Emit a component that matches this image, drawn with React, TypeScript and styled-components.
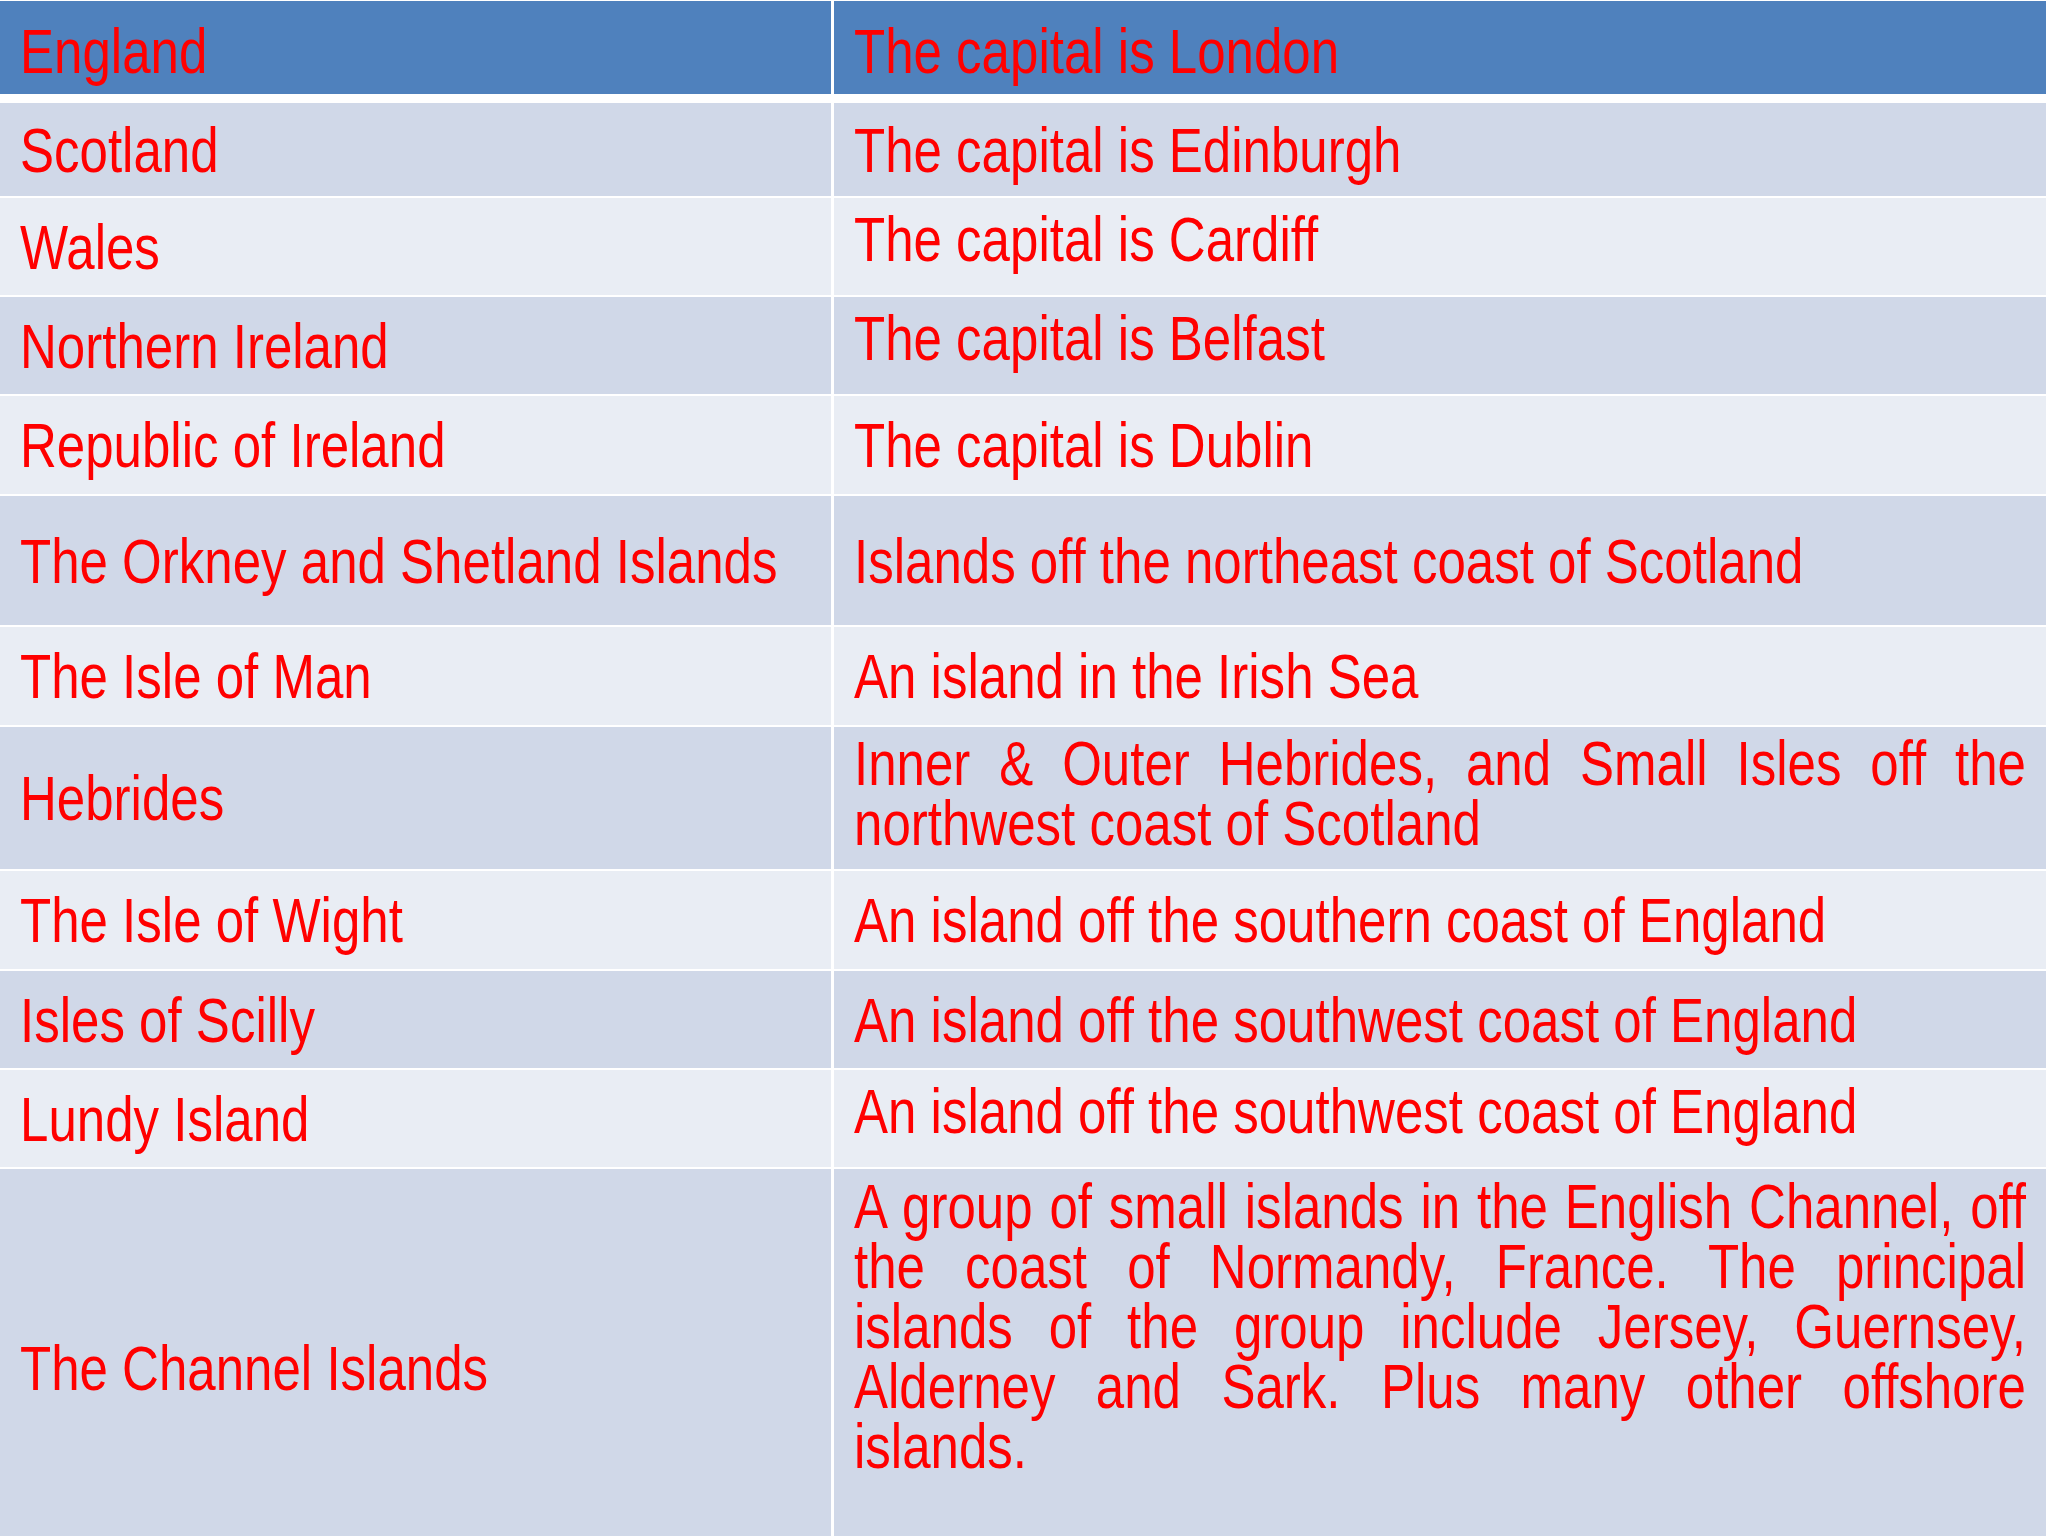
import styled, { createGlobalStyle } from 'styled-components'

const GlobalStyle = createGlobalStyle`
  html, body {
    margin: 0;
    padding: 0;
    background: #ffffff;
    overflow: hidden;
  }
`;

type Tone = 'head' | 'dark' | 'light';

const tones: Record<Tone, string> = {
    head: '#4f81bd',
    dark: '#d0d8e8',
    light: '#e9edf4',
};

// no narrow face installed: Liberation Sans squeezed to Arial Narrow proportions
const NARROW = 0.81;

const Table = styled.div`
    display: flex;
    flex-direction: column;
    gap: 2px;
    width: 2046px;
    padding-top: 1px;
    background: #ffffff;
    font-family: "Liberation Sans", Arial, sans-serif;
    font-size: 63px;
    color: #ff0000;
`;

interface RowProps {
    $height: number;
    $head?: boolean;
}
const Row = styled.div<RowProps>`
    display: grid;
    grid-template-columns: 831px 1fr;
    column-gap: 3px;
    height: ${(p) => p.$height}px;
    flex-shrink: 0;
    margin-bottom: ${(p) => (p.$head ? 7 : 0)}px;
`;

interface CellProps {
    $tone: Tone;
    $top?: boolean;
}
const Cell = styled.div<CellProps>`
    display: flex;
    align-items: ${(p) => (p.$top ? 'flex-start' : 'center')};
    background: ${(p) => tones[p.$tone]};
    padding: ${(p) => (p.$top ? '7px' : '0')} 20px 0 20px;
    box-sizing: border-box;
    min-width: 0;
    overflow: hidden;
`;

interface TextProps {
    $lift?: number;
    $justify?: boolean;
}
const CellText = styled.div<TextProps>`
    flex: none;
    width: calc(100% / ${NARROW});
    line-height: ${(p) => (p.$justify ? '60px' : '74px')};
    text-align: ${(p) => (p.$justify ? 'justify' : 'left')};
    white-space: ${(p) => (p.$justify ? 'normal' : 'nowrap')};
    transform-origin: left center;
    transform: translateY(${(p) => -(p.$lift || 0)}px) scaleX(${NARROW});
`;

interface Entry {
    place: string;
    about: string;
    height: number;
    lift?: number;
    justify?: boolean;
    top?: boolean;
}

const rows: Entry[] = [
    { place: 'Scotland', about: 'The capital is Edinburgh', height: 93 },
    { place: 'Wales', about: 'The capital is Cardiff', height: 97, lift: 8 },
    { place: 'Northern Ireland', about: 'The capital is Belfast', height: 97, lift: 8 },
    { place: 'Republic of Ireland', about: 'The capital is Dublin', height: 98 },
    { place: 'The Orkney and Shetland Islands', about: 'Islands off the northeast coast of Scotland', height: 129 },
    { place: 'The Isle of Man', about: 'An island in the Irish Sea', height: 98 },
    {
        place: 'Hebrides',
        about: 'Inner & Outer Hebrides, and Small Isles off the northwest coast of Scotland',
        height: 142,
        lift: 5,
        justify: true,
    },
    { place: 'The Isle of Wight', about: 'An island off the southern coast of England', height: 98 },
    { place: 'Isles of Scilly', about: 'An island off the southwest coast of England', height: 97 },
    { place: 'Lundy Island', about: 'An island off the southwest coast of England', height: 97, lift: 8 },
    {
        place: 'The Channel Islands',
        about: 'A group of small islands in the English Channel, off the coast of Normandy, France. The principal islands of the group include Jersey, Guernsey, Alderney and Sark. Plus many other offshore islands.',
        height: 397,
        justify: true,
        top: true,
    },
];

const App = () => {
    return (
        <>
            <GlobalStyle />
            <Table>
                <Row $height={93} $head>
                    <Cell $tone="head">
                        <CellText $lift={-3}>England</CellText>
                    </Cell>
                    <Cell $tone="head">
                        <CellText $lift={-3}>The capital is London</CellText>
                    </Cell>
                </Row>
                {rows.map((r, i) => {
                    const tone: Tone = i % 2 === 0 ? 'dark' : 'light';
                    return (
                        <Row key={r.place} $height={r.height}>
                            <Cell $tone={tone}>
                                <CellText>{r.place}</CellText>
                            </Cell>
                            <Cell $tone={tone} $top={r.top}>
                                <CellText $lift={r.lift} $justify={r.justify}>
                                    {r.about}
                                </CellText>
                            </Cell>
                        </Row>
                    );
                })}
            </Table>
        </>
    );
}

export default App;
